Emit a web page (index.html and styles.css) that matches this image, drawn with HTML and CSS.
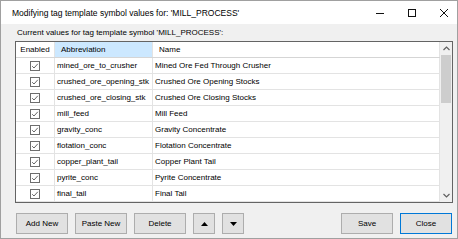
FILE: index.html
```html
<!DOCTYPE html>
<html lang="en">
<head>
    <meta charset="UTF-8">
    <title>Modifying tag template symbol values</title>
    <link rel="stylesheet" href="styles.css">
</head>
<body>
    <div class="window">
        <div class="titlebar">
            <span class="title">Modifying tag template symbol values for: 'MILL_PROCESS'</span>
            <div class="controls">
                <svg class="ctl" width="10" height="10" viewBox="0 0 10 10"><path d="M1 5.5h8" stroke="#111" stroke-width="1"/></svg>
                <svg class="ctl" width="10" height="10" viewBox="0 0 10 10"><rect x="1.5" y="1.5" width="7" height="7" fill="none" stroke="#111" stroke-width="1"/></svg>
                <svg class="ctl" width="10" height="10" viewBox="0 0 10 10"><path d="M1 1l8 8M9 1l-8 8" stroke="#111" stroke-width="1"/></svg>
            </div>
        </div>

        <div class="client">
            <div class="caption">Current values for tag template symbol 'MILL_PROCESS':</div>

            <div class="grid">
                <div class="grid-body">
                    <div class="row head">
                        <div class="cell c-en">Enabled</div>
                        <div class="cell c-ab sel">Abbreviation</div>
                        <div class="cell c-nm">Name</div>
                    </div>
                    <div class="rows" id="rows"></div>
                </div>
                <div class="vscroll">
                    <svg width="7" height="5" viewBox="0 0 7 5"><path d="M0.5 4L3.5 1L6.5 4" fill="none" stroke="#606060" stroke-width="1.2"/></svg>
                    <div class="track"><div class="thumb"></div></div>
                    <svg width="7" height="5" viewBox="0 0 7 5"><path d="M0.5 1L3.5 4L6.5 1" fill="none" stroke="#606060" stroke-width="1.2"/></svg>
                </div>
            </div>

            <div class="buttons">
                <button class="btn">Add New</button>
                <button class="btn">Paste New</button>
                <button class="btn">Delete</button>
                <button class="btn small"><svg width="7" height="4" viewBox="0 0 7 4"><path d="M0 4L3.5 0L7 4z" fill="#000"/></svg></button>
                <button class="btn small"><svg width="7" height="4" viewBox="0 0 7 4"><path d="M0 0L3.5 4L7 0z" fill="#000"/></svg></button>
                <div class="spacer"></div>
                <button class="btn">Save</button>
                <button class="btn default">Close</button>
            </div>
        </div>
    </div>

    <script>
let values = [
    ["mined_ore_to_crusher", "Mined Ore Fed Through Crusher"],
    ["crushed_ore_opening_stk", "Crushed Ore Opening Stocks"],
    ["crushed_ore_closing_stk", "Crushed Ore Closing Stocks"],
    ["mill_feed", "Mill Feed"],
    ["gravity_conc", "Gravity Concentrate"],
    ["flotation_conc", "Flotation Concentrate"],
    ["copper_plant_tail", "Copper Plant Tail"],
    ["pyrite_conc", "Pyrite Concentrate"],
    ["final_tail", "Final Tail"]
];

let rowsBox = document.querySelector("#rows");
let check = '<svg width="10" height="10" viewBox="0 0 10 10"><rect x="0.5" y="0.5" width="9" height="9" fill="#fff" stroke="#6d6d6d"/><path d="M2.2 5.2l1.8 1.8l3.8-4.2" fill="none" stroke="#555" stroke-width="0.9"/></svg>';

for (const v of values) {
    let row = document.createElement("div");
    row.className = "row";
    row.innerHTML = '<div class="cell c-en">' + check + '</div>'
        + '<div class="cell c-ab">' + v[0] + '</div>'
        + '<div class="cell c-nm">' + v[1] + '</div>';
    rowsBox.appendChild(row);
}
    </script>
</body>
</html>
```

FILE: styles.css
```css
*{
    margin: 0;
    padding: 0;
    box-sizing: border-box;
}
body{
    width: 458px;
    height: 239px;
    background-color: #fff;
    font-family: "Liberation Sans", Arial, sans-serif;
    color: #000;
}
.window{
    width: 458px;
    height: 239px;
    border: 1px solid #a0a0a0;
    display: flex;
    flex-direction: column;
    background-color: #fff;
}
.titlebar{
    height: 23px;
    display: flex;
    align-items: center;
    padding-left: 11px;
    font-size: 8.5px;
}
.title{
    flex: 1;
}
.controls{
    display: flex;
    gap: 22px;
    padding-right: 8px;
}
.ctl{
    display: block;
}
.client{
    flex: 1;
    background-color: #f0f0f0;
    padding: 0 2px 0 14px;
    display: flex;
    flex-direction: column;
    font-size: 8px;
}
.caption{
    height: 17px;
    line-height: 17px;
    padding-left: 2px;
}
.grid{
    height: 162px;
    width: 438px;
    border: 1px solid #646464;
    display: flex;
    background-color: #fff;
}
.grid-body{
    flex: 1;
    overflow: hidden;
}
.row{
    display: flex;
    height: 16px;
    border-bottom: 1px solid #e3e3e3;
}
.row.head{
    border-bottom: 1px solid #d5d5d5;
}
.cell{
    display: flex;
    align-items: center;
    padding-left: 2px;
    border-right: 1px solid #e3e3e3;
    white-space: nowrap;
}
.c-en{
    width: 39px;
    justify-content: center;
    padding-left: 0;
}
.c-ab{
    width: 98px;
}
.c-nm{
    flex: 1;
}
.head .cell{
    padding-left: 6px;
}
.head .c-en{
    padding-left: 0;
}
.sel{
    background-color: #cce8ff;
}
.vscroll{
    width: 12px;
    background-color: #f0f0f0;
    display: flex;
    flex-direction: column;
    align-items: center;
    padding: 4px 0;
}
.track{
    flex: 1;
    width: 100%;
    padding: 4px 1px;
}
.thumb{
    height: 48px;
    background-color: #cdcdcd;
}
.buttons{
    display: flex;
    gap: 7px;
    padding: 10px 3px 0 1px;
}
.btn{
    width: 52px;
    height: 21px;
    background-color: #e1e1e1;
    border: 1px solid #adadad;
    font-family: "Liberation Sans", Arial, sans-serif;
    font-size: 8px;
    color: #000;
    display: flex;
    align-items: center;
    justify-content: center;
}
.btn.small{
    width: 22px;
}
.btn.default{
    border: 1px solid #0078d7;
}
.spacer{
    flex: 1;
}
```
